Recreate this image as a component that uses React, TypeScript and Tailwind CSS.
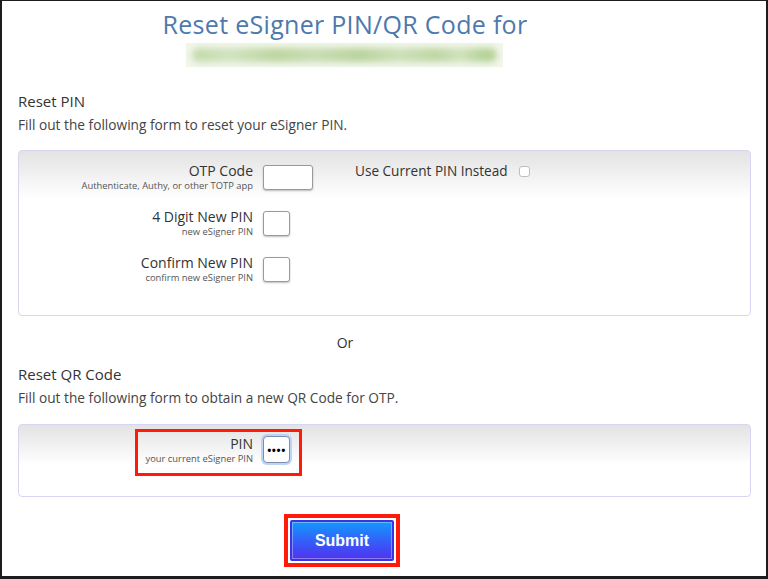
import React from "react";

type FieldProps = {
  label: string;
  hint: string;
  inputWidth: string;
};

const Field = ({ label, hint, inputWidth }: FieldProps) => {
  return (
    <div className="flex items-start h-[46px]">
      <div className="w-[234px] text-right">
        <div className="text-[14px] leading-[16px] text-[#333]">{label}</div>
        <div className="mt-[1px] text-[9.4px] leading-[12px] text-[#555]">{hint}</div>
      </div>
      <div
        className={`ml-[10px] mt-[2px] h-[25px] ${inputWidth} rounded-[3px] border border-[#9a9a9a] bg-white shadow-[0_1px_2px_rgba(0,0,0,0.25)]`}
      />
    </div>
  );
};

const App = () => {
  return (
    <div className="w-[768px] h-[579px] overflow-hidden bg-white font-['Open_Sans',sans-serif]">
      <div className="w-[768px] h-[579px] border-x-2 border-t border-b-[3px] border-[#1c1c1c] flex flex-col">
        {/* header */}
        <div className="mt-[8px] text-center pr-[78px] text-[25px] leading-[30px] tracking-[0.3px] text-[#4d79ad]">
          Reset eSigner PIN/QR Code for
        </div>
        <div className="mt-[4px] ml-[184px] w-[317px] h-[24px] bg-[#f1f6ea]">
          <div className="mx-[6px] mt-[5px] h-[14px] rounded-full bg-[linear-gradient(90deg,#c2d9a8,#d2e3bf_12%,#bcd59f_28%,#c9ddb3_40%,#b9d39c_55%,#cde0b8_68%,#bed6a3_80%,#d0e2bc_88%,#b7d299_95%)] blur-[3px]" />
        </div>

        {/* reset pin */}
        <div className="mt-[25px] ml-[16px] text-[15px] leading-[18px] text-[#333]">Reset PIN</div>
        <div className="mt-[6px] ml-[16px] text-[13.7px] leading-[18px] text-[#444]">
          Fill out the following form to reset your eSigner PIN.
        </div>
        <div className="mt-[16px] ml-[16px] w-[733px] h-[166px] rounded-[4px] border border-[#d6d6f4] bg-[linear-gradient(to_bottom,#e3e3e3,#ffffff_48px)] pt-[12px] flex">
          <div className="flex flex-col">
            <Field label="OTP Code" hint="Authenticate, Authy, or other TOTP app" inputWidth="w-[50px]" />
            <Field label="4 Digit New PIN" hint="new eSigner PIN" inputWidth="w-[27px]" />
            <Field label="Confirm New PIN" hint="confirm new eSigner PIN" inputWidth="w-[27px]" />
          </div>
          <div className="ml-[42px] flex items-center h-[16px] gap-[11px]">
            <span className="text-[13.6px] leading-[16px] text-[#333]">Use Current PIN Instead</span>
            <span className="w-[11px] h-[11px] rounded-[3px] border border-[#bdbdbd] bg-white" />
          </div>
        </div>

        <div className="mt-[18px] text-center pr-[78px] text-[14px] leading-[18px] text-[#333]">Or</div>

        {/* reset qr */}
        <div className="mt-[13px] ml-[16px] text-[15px] leading-[18px] text-[#333]">Reset QR Code</div>
        <div className="mt-[6px] ml-[16px] text-[13.7px] leading-[18px] text-[#444]">
          Fill out the following form to obtain a new QR Code for OTP.
        </div>
        <div className="mt-[17px] ml-[16px] w-[733px] h-[73px] rounded-[4px] border border-[#d6d6f4] bg-[linear-gradient(to_bottom,#e3e3e3,#ffffff_40px)] pt-[4px]">
          <div className="ml-[116px] w-[167px] h-[47px] border-[3px] border-[#ff1a0a] flex items-start pt-[4px] pr-[9px]">
            <div className="flex-1 text-right">
              <div className="text-[14px] leading-[16px] text-[#333]">PIN</div>
              <div className="mt-[1px] text-[9.4px] leading-[12px] text-[#555]">your current eSigner PIN</div>
            </div>
            <div className="ml-[10px] w-[27px] h-[27px] rounded-[4px] border border-[#7c8fb0] bg-white shadow-[0_0_0_2px_#bcd4f7] flex items-center justify-center text-[11px] font-bold tracking-[0.5px] text-black leading-none">
              ••••
            </div>
          </div>
        </div>

        {/* submit */}
        <div className="mt-[17px] ml-[282px] w-[116px] h-[53px] border-[4px] border-[#ff1a0a] bg-white p-[2px]">
          <button className="w-full h-full rounded-[2px] border-2 border-[#3b33e6] bg-[linear-gradient(to_bottom,#1398ff,#3f4cf5_70%,#5035ee)] shadow-[inset_0_0_0_1px_rgba(255,255,255,0.35)] text-white font-['Liberation_Sans',sans-serif] font-bold text-[16px]">
            Submit
          </button>
        </div>
      </div>
    </div>
  );
};

export default App;
